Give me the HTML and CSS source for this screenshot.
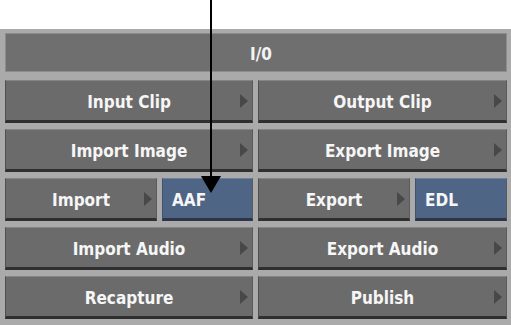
FILE: index.html
```html
<!DOCTYPE html>
<html>
<head>
<meta charset="utf-8">
<link rel="stylesheet" href="styles.css">
</head>
<body>
<div class="panel">
  <div class="title">I/0</div>
  <div class="grid">
    <div class="btn"><span>Input Clip</span><i class="tri"></i></div>
    <div class="btn"><span>Output Clip</span><i class="tri"></i></div>
    <div class="btn"><span>Import Image</span><i class="tri"></i></div>
    <div class="btn"><span>Export Image</span><i class="tri"></i></div>
    <div class="pair">
      <div class="btn"><span>Import</span><i class="tri"></i></div>
      <div class="btn blue"><span>AAF</span></div>
    </div>
    <div class="pair">
      <div class="btn"><span>Export</span><i class="tri"></i></div>
      <div class="btn blue"><span>EDL</span></div>
    </div>
    <div class="btn"><span>Import Audio</span><i class="tri"></i></div>
    <div class="btn"><span>Export Audio</span><i class="tri"></i></div>
    <div class="btn"><span>Recapture</span><i class="tri"></i></div>
    <div class="btn"><span>Publish</span><i class="tri"></i></div>
  </div>
</div>
<svg class="pointer" width="24" height="194" viewBox="0 0 24 194">
  <line x1="12" y1="0" x2="12" y2="180" stroke="#000" stroke-width="2"/>
  <polygon points="2,176 22,176 12,193" fill="#000"/>
</svg>
</body>
</html>
```
FILE: styles.css
```css
html, body {
  margin: 0;
  padding: 0;
  background: #fff;
  width: 511px;
  height: 325px;
  overflow: hidden;
  font-family: "DejaVu Sans Condensed", "DejaVu Sans", sans-serif;
}
body { position: relative; }
.panel {
  margin-top: 29px;
  height: 296px;
  background: #aaaaaa;
  padding: 4px 4px 0 5px;
  box-sizing: border-box;
}
.title {
  height: 39px;
  box-sizing: border-box;
  background: #6f6f6f;
  border: 1px solid #8c8c8c;
  color: #f4f4f4;
  font-weight: bold;
  font-size: 17px;
  display: flex;
  align-items: center;
  justify-content: center;
  padding-left: 10px;
  padding-top: 2px;
}
.grid {
  margin-top: 8px;
  display: grid;
  grid-template-columns: 248px 249px;
  column-gap: 5px;
  grid-auto-rows: 43px;
  row-gap: 6px;
}
.pair {
  display: grid;
  grid-template-columns: 152px 1fr;
  column-gap: 5px;
}
.btn {
  position: relative;
  box-sizing: border-box;
  background: #6b6b6b;
  border-top: 1px solid #858585;
  border-left: 1px solid #4f4f4f;
  border-right: 1px solid #5a5a5a;
  border-bottom: 3px solid #2f2f2f;
  color: #f6f6f6;
  font-weight: bold;
  font-size: 17px;
  display: flex;
  align-items: center;
  justify-content: center;
}
.btn span { padding-top: 3px; }
.tri {
  position: absolute;
  right: 4px;
  top: 50%;
  margin-top: -7px;
  width: 0;
  height: 0;
  border-top: 7px solid transparent;
  border-bottom: 7px solid transparent;
  border-left: 8px solid #484848;
}
.blue {
  background: #4e6586;
  border-top-color: #6c80a0;
  border-left-color: #3f5370;
  border-bottom-color: #2c3648;
  justify-content: flex-start;
  padding-left: 9px;
}
.pointer {
  position: absolute;
  left: 199px;
  top: 0;
}
```
